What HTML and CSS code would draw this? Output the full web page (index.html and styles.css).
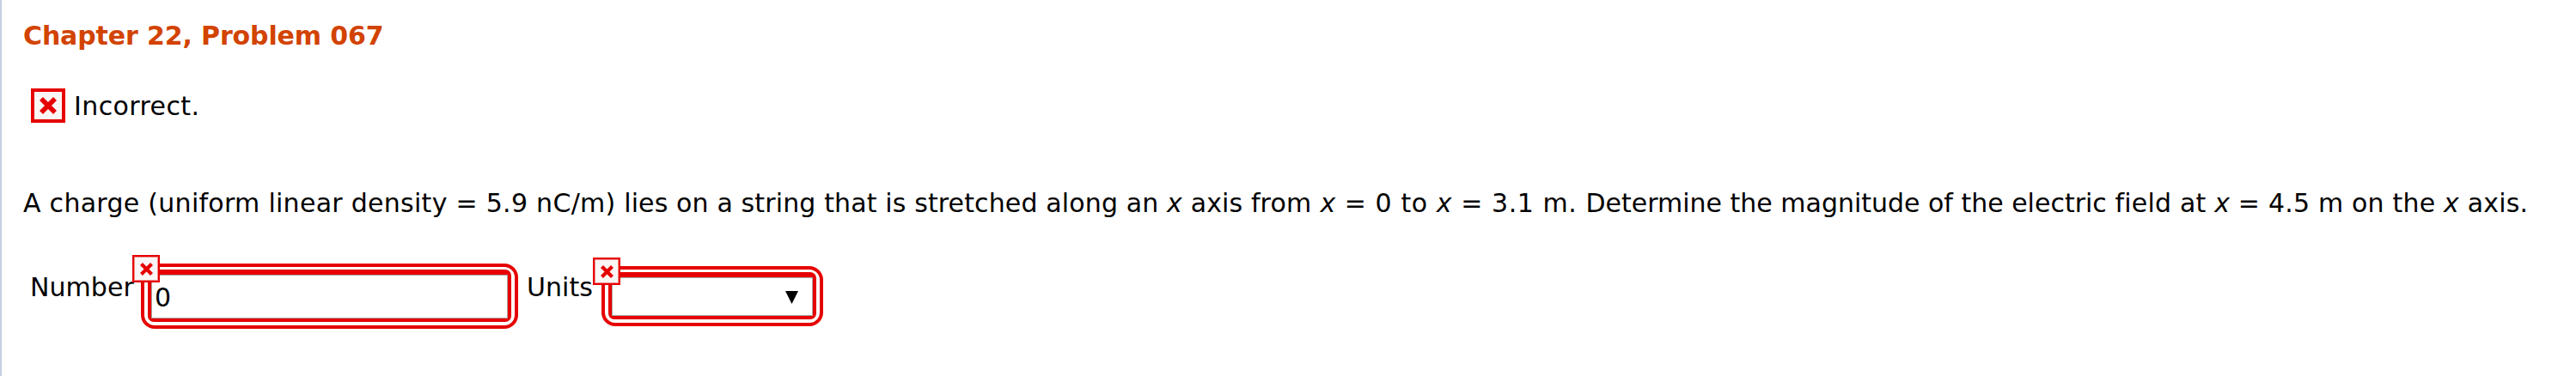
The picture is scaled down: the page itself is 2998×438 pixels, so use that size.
FILE: index.html
```html
<!DOCTYPE html>
<html lang="en">
<head>
<meta charset="utf-8">
<title>Chapter 22, Problem 067</title>
<link rel="stylesheet" href="styles.css">
</head>
<body>
<main class="page">
  <h1 class="title">Chapter 22, Problem 067</h1>
  <div class="status">
    <span class="mark mark-large"><svg viewBox="0 0 20 20"><path class="x" d="M2 2 18 18M18 2 2 18"/></svg></span>
    <span class="status-text">Incorrect.</span>
  </div>
  <p class="question"><span class="run-a">A charge (uniform linear density = 5.9 nC/m)</span><span class="run-b"> lies on a string that is stretched along an <i>x</i> axis from</span><span class="run-c"> <i>x</i> = 0 to <i>x</i> = 3.1 m. </span><span class="run-d">Determine the magnitude of the electric</span> field at <i>x</i> = 4.5 m on the <i>x</i> axis.</p>
  <form class="answers">
    <label class="label label-number">Number</label>
    <span class="ring ring-number">
      <span class="mark mark-small"><svg viewBox="0 0 20 20"><path class="x" d="M2 2 18 18M18 2 2 18"/></svg></span>
      <span class="frame"><input class="field" type="text" value="0"></span>
    </span>
    <label class="label label-units">Units</label>
    <span class="ring ring-units">
      <span class="mark mark-small"><svg viewBox="0 0 20 20"><path class="x" d="M2 2 18 18M18 2 2 18"/></svg></span>
      <span class="frame"><span class="select"><svg class="arrow" viewBox="0 0 15 15"><path d="M0 0H15L7.5 15Z"/></svg></span></span>
    </span>
  </form>
</main>
</body>
</html>
```
FILE: styles.css
```css
* { box-sizing: border-box; }
html, body { margin: 0; height: 100%; background: #fff; }
body { font-family: "DejaVu Sans", Verdana, sans-serif; font-size: 30px; color: #000; letter-spacing: 0.19px; font-variant-ligatures: none; }
.page { height: 438px; border-left: 2px solid #c5d0e4; padding: 24px 0 0 25px; overflow: hidden; }
.title { margin: 0; font-size: 30px; line-height: 36px; font-weight: 700; color: #d24300; letter-spacing: -0.13px; }
.status { display: flex; align-items: center; gap: 10px; margin: 43px 0 0 9px; height: 40px; }
.status-text { padding-top: 1px; letter-spacing: 0.4px; }
.mark { display: flex; align-items: center; justify-content: center; border: 4px solid #e60000; background: #fbf6f6; }
.mark svg { display: block; }
.x { fill: none; stroke: #e60000; stroke-width: 5.6; }
.mark-large { width: 40px; height: 40px; }
.mark-large svg { width: 20px; height: 20px; }
.mark-small { position: absolute; z-index: 1; left: -14px; top: -14px; width: 32px; height: 32px; border-width: 2px; box-shadow: inset 0 0 0 1px #f08a8a; }
.mark-small svg { width: 15px; height: 15px; }
.question { margin: 76px 0 0; line-height: 36px; white-space: nowrap; }
.run-a { letter-spacing: 0.28px; }
.run-b { letter-spacing: 0.13px; }
.run-c { letter-spacing: 0.57px; }
.run-d { letter-spacing: -0.01px; }
.answers { display: flex; align-items: flex-start; margin-top: 52px; padding-left: 7px; }
.label { line-height: 36px; margin-top: 10px; letter-spacing: 0.05px; }
.label-number { width: 130px; padding-left: 1px; }
.label-units { width: 97px; padding-left: 10px; }
.ring { position: relative; display: block; border: 4px solid #e60000; border-radius: 16px; padding: 3px 4px 4px; background: #fff; }
.ring-number { width: 439px; height: 76px; }
.ring-units { width: 258px; height: 70px; margin-top: 3px; }
.frame { display: block; width: 100%; height: 100%; padding: 6px 4px 4px; border-radius: 7px; background: #e60000; }
.field, .select { display: block; width: 100%; height: 100%; border: 1px solid #a8a8a8; border-radius: 0; background: #fff; }
.field { padding: 1px 0 0 3px; font: 30px "DejaVu Sans", Verdana, sans-serif; color: #000; outline: none; }
.select { display: flex; align-items: center; justify-content: flex-end; padding: 1px 16px 0 0; }
.arrow { width: 15px; height: 15px; }
```
